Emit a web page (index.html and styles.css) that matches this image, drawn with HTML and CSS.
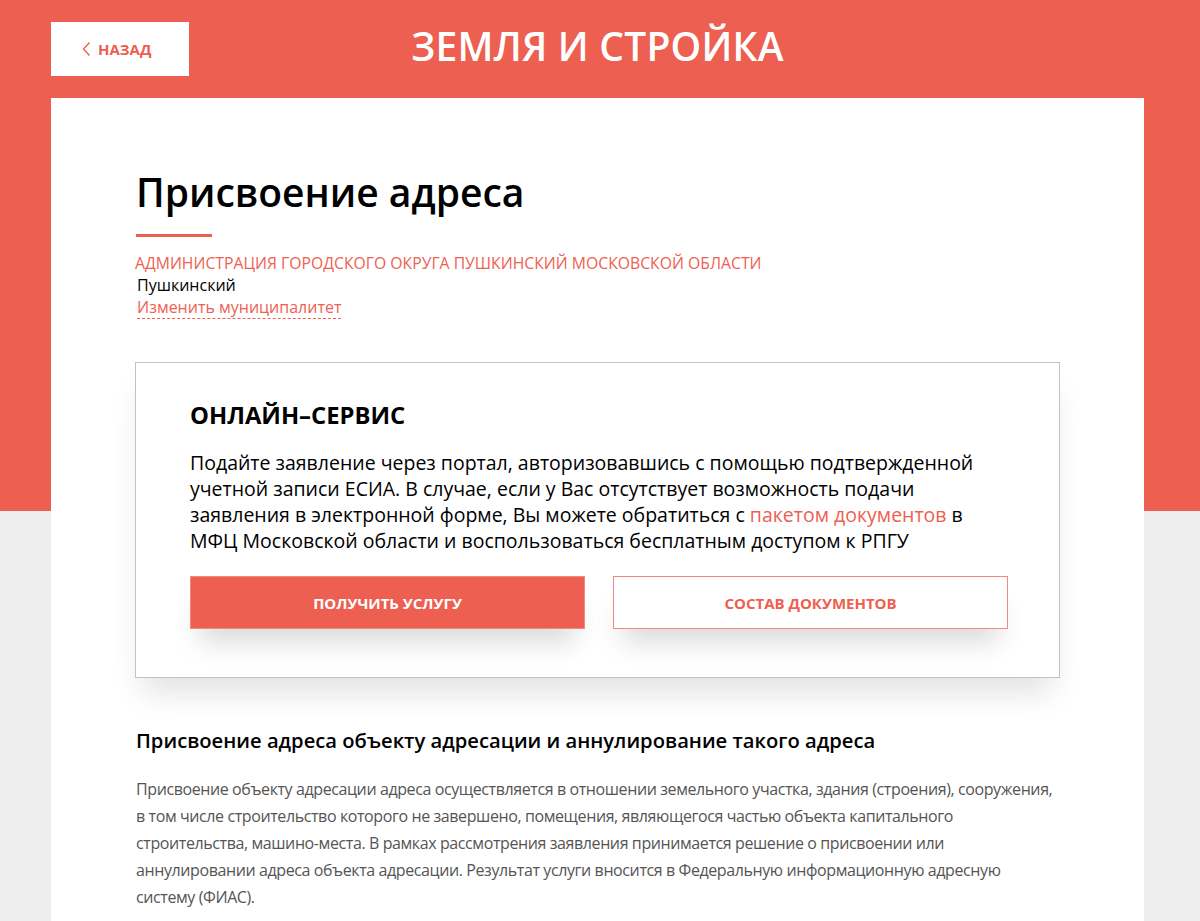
FILE: index.html
```html
<!DOCTYPE html>
<html lang="ru">
<head>
<meta charset="utf-8">
<title>Присвоение адреса</title>
<link rel="stylesheet" href="styles.css">
</head>
<body>
<div class="page">
  <header class="header">
    <a class="back" href="#">
      <svg class="back-icon" width="9" height="16" viewBox="0 0 9 16"><polyline points="7.5,1.5 1.5,8 7.5,14.5" fill="none" stroke="#ec5f51" stroke-width="1.4"/></svg>
      <span>НАЗАД</span>
    </a>
    <h1 class="site-title">ЗЕМЛЯ И СТРОЙКА</h1>
    <div class="spacer"></div>
  </header>
  <main class="card">
    <h2 class="page-title">Присвоение адреса</h2>
    <div class="title-line"></div>
    <div class="org">АДМИНИСТРАЦИЯ ГОРОДСКОГО ОКРУГА ПУШКИНСКИЙ МОСКОВСКОЙ ОБЛАСТИ</div>
    <div class="muni">Пушкинский</div>
    <div class="change-row"><a class="change" href="#">Изменить муниципалитет</a></div>

    <section class="service">
      <h3 class="service-title">ОНЛАЙН–СЕРВИС</h3>
      <p class="service-text">Подайте заявление через портал, авторизовавшись с помощью подтвержденной учетной записи ЕСИА. В случае, если у Вас отсутствует возможность подачи заявления в электронной форме, Вы можете обратиться с <a class="link" href="#">пакетом документов</a> в МФЦ Московской области и воспользоваться бесплатным доступом к РПГУ</p>
      <div class="buttons">
        <a class="btn btn-primary" href="#">ПОЛУЧИТЬ УСЛУГУ</a>
        <a class="btn btn-outline" href="#">СОСТАВ ДОКУМЕНТОВ</a>
      </div>
    </section>

    <h3 class="section-title">Присвоение адреса объекту адресации и аннулирование такого адреса</h3>
    <p class="section-text">Присвоение объекту адресации адреса осуществляется в отношении земельного участка, здания (строения), сооружения, в том числе строительство которого не завершено, помещения, являющегося частью объекта капитального строительства, машино-места. В рамках рассмотрения заявления принимается решение о присвоении или аннулировании адреса объекта адресации. Результат услуги вносится в Федеральную информационную адресную систему (ФИАС).</p>
  </main>
</div>
</body>
</html>
```

FILE: styles.css
```css
* { box-sizing: border-box; }

html, body {
  margin: 0;
  padding: 0;
}

body {
  font-family: "Open Sans", "Noto Sans", sans-serif;
  background: linear-gradient(#ec5f51 0, #ec5f51 511px, #eeeeee 511px);
  min-height: 921px;
  color: #000;
}

a { text-decoration: none; }

.page {
  width: 1093px;
  margin-left: 51px;
}

.header {
  height: 98px;
  display: grid;
  grid-template-columns: 138px 1fr 138px;
  align-items: start;
}

.back {
  margin-top: 22px;
  height: 54px;
  background: #fff;
  display: flex;
  align-items: center;
  padding-left: 31px;
  gap: 7px;
  color: #ec5f51;
  font-weight: 700;
  font-size: 15px;
}

.back-icon { display: block; }

.site-title {
  margin: 0;
  text-align: center;
  color: #fff;
  font-weight: 600;
  font-size: 39px;
  line-height: 46px;
  padding-top: 23px;
  letter-spacing: 0.2px;
}

.card {
  background: #fff;
  padding: 71px 84px 40px 84px;
  min-height: 823px;
}

.page-title {
  margin: 0 0 0 1px;
  font-size: 39px;
  line-height: 46px;
  font-weight: 600;
  color: #000;
}

.title-line {
  width: 76px;
  height: 3px;
  background: #ec5f51;
  margin: 19px 0 0 1px;
}

.org {
  margin-top: 15px;
  color: #ee6152;
  font-size: 15.75px;
  line-height: 22px;
}

.muni {
  margin-left: 2px;
  font-size: 16px;
  line-height: 22px;
  color: #000;
}

.change-row {
  margin-left: 2px;
  font-size: 16px;
  line-height: 22px;
}

.change {
  color: #ee6152;
  border-bottom: 1px dashed #ee6152;
}

.service {
  margin-top: 44px;
  border: 1px solid #c2c2c2;
  padding: 37px 51px 48px 54px;
  box-shadow: 0 22px 30px -8px rgba(0, 0, 0, 0.12);
}

.service-title {
  margin: 0;
  font-size: 23.8px;
  line-height: 30px;
  font-weight: 700;
}

.service-text {
  margin: 20px 0 0 0;
  font-size: 19.5px;
  line-height: 26px;
  color: #000;
}

.link { color: #ec5f51; }

.buttons {
  margin-top: 22px;
  display: grid;
  grid-template-columns: 1fr 1fr;
  gap: 28px;
}

.btn {
  height: 53px;
  display: flex;
  align-items: center;
  justify-content: center;
  font-size: 15px;
  font-weight: 700;
  box-shadow: 0 22px 28px -10px rgba(0, 0, 0, 0.16);
}

.btn-primary {
  background: #ec5f51;
  color: #fff;
  border: 1px solid #f08a80;
}

.btn-outline {
  background: #fff;
  color: #ec5f51;
  border: 1px solid #f08a80;
}

.section-title {
  margin: 48px 0 0 1px;
  font-size: 20.2px;
  line-height: 28px;
  font-weight: 600;
}

.section-text {
  margin: 22px 0 0 1px;
  max-width: 917px;
  font-size: 16px;
  letter-spacing: -0.4px;
  line-height: 27px;
  color: #555;
}
```
